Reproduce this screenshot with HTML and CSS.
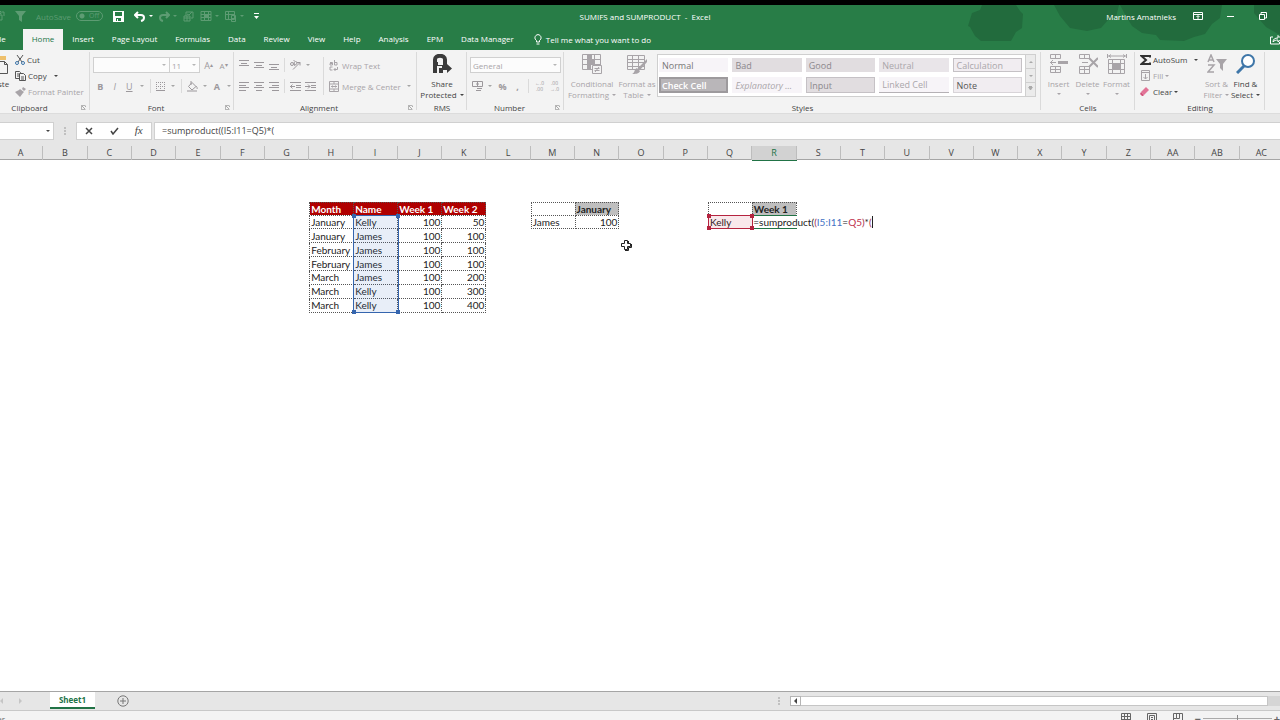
FILE: index.html
```
<!DOCTYPE html>
<html lang="en">
<head>
    <meta charset="UTF-8">
    <meta name="viewport" content="width=device-width, initial-scale=1.0">
    <title>SUMIFS and SUMPRODUCT - Excel</title>
    <link rel="stylesheet" href="styles.css">
</head>
<body>
    <header class="top">
        <svg class="blobs" width="320" height="45" viewBox="0 0 320 45" aria-hidden="true">
            <path d="M14 0h34l4 6 3 3-1 14-6 4-5 9H13L7 31 2 22l-2-1 4-13 8-3z"/>
            <path d="M86 0h65l-3 12-8 3-7 8-14 3-17-3-10-12z"/>
            <path d="M152 0h102l-2 13-8 6-7 10-11 3-10 4-24-1-4-5-14-2-10-7-6-10z"/>
            <path d="M286 0h34v30l-10-1-12-7-7-8-5-6z"/>
        </svg>
        <div class="titlebar">
            <div class="qat">
                <button class="dim" aria-label="Sort"><svg width="12" height="12" viewBox="0 0 12 12"><path d="M5 1.500h3v2H5M5 5h4v5H5zM2 1v9M0 8l2 2 2-2M9 2h2v4"/></svg></button>
                <button class="dim gapped" aria-label="Filter"><svg width="11" height="11" viewBox="0 0 11 11"><path class="fill" d="M0 0h11L7 5v6L4 9V5z"/></svg></button>
                <label class="autosave dim"><span>AutoSave</span><input type="checkbox" disabled><span class="toggle">Off</span></label>
                <button class="gapped" aria-label="Save"><svg width="11" height="11" viewBox="0 0 11 11"><path class="fill" fill-rule="evenodd" d="M0 0h11v11H0zM2 1v4h7V1zM3 7v3h1V8h1v2h3V7z"/></svg></button>
                <button class="gapped" aria-label="Undo"><svg width="12" height="11" viewBox="0 0 12 11"><path class="thick" d="M4 1L1 4l3 3M1 4h6c4 0 4 5 0 6"/></svg><i class="caret"></i></button>
                <button class="dim" aria-label="Redo"><svg width="11" height="11" viewBox="0 0 11 11"><path class="thick" d="M7 1l3 3-3 3M10 4H4c-4 0-4 5 0 6"/></svg><i class="caret"></i></button>
                <button class="dim" aria-label="Edit chart"><svg width="11" height="11" viewBox="0 0 11 11"><path d="M3 5V1h7v6H8M1 5h6v5H1zM1 7h6M4 5v5M4 3l2 1 3-3"/></svg></button>
                <button class="dim" aria-label="Pivot table"><svg width="12" height="11" viewBox="0 0 12 11"><path d="M1 .5h10v9H1zM1 3.500h10M1 6.500h10M4.500.500v9M8.500.500v9"/><path class="fill" d="M4 3h5v4H4z"/></svg><i class="caret"></i></button>
                <button class="dim" aria-label="Insert cells"><svg width="12" height="11" viewBox="0 0 12 11"><path d="M.5.500h9v8h-9zM.5 3.500h9M3.500.500v8M6.500 4.500h4v6h-4zM6 7.500h4"/></svg><i class="caret"></i></button>
                <button class="gapped" aria-label="Customize toolbar"><svg width="5" height="6" viewBox="0 0 5 6"><path class="fill" d="M0 0h5v1H0zM0 3h5L2.500 6z"/></svg></button>
            </div>
            <h1>SUMIFS and SUMPRODUCT&nbsp; -&nbsp; Excel</h1>
            <div class="window">
                <span class="user">Martins Amatnieks</span>
                <button aria-label="Ribbon display"><svg width="10" height="9" viewBox="0 0 10 9"><path d="M.5.500h9v7h-9zM.5 2.500h9M5 7V4M3.500 5L5 3.500 6.500 5"/></svg></button>
                <button aria-label="Minimize"><svg width="8" height="8" viewBox="0 0 8 8"><path d="M0 4.500h7"/></svg></button>
                <button aria-label="Restore"><svg width="8" height="8" viewBox="0 0 8 8"><path d="M.5 2.500h5v5h-5zM2 2V.5h5.500V6H6"/></svg></button>
            </div>
        </div>
        <nav class="tabs">
            <a href="#" class="file">File</a>
            <a href="#" class="active">Home</a>
            <a href="#">Insert</a>
            <a href="#">Page Layout</a>
            <a href="#">Formulas</a>
            <a href="#">Data</a>
            <a href="#">Review</a>
            <a href="#">View</a>
            <a href="#">Help</a>
            <a href="#">Analysis</a>
            <a href="#">EPM</a>
            <a href="#">Data Manager</a>
            <a href="#" class="tell"><svg width="8" height="11" viewBox="0 0 8 11"><path d="M2.500 8V6.500C0 5 .5 1 4 .6 7.500 1 8 5 5.500 6.500V8zM2.500 10h3"/></svg>Tell me what you want to do</a>
            <a href="#" class="share" aria-label="Share"><svg width="12" height="11" viewBox="0 0 12 11"><path d="M3 3H.5v7h9V8M3 8c0-3 2-4 5-4V1.500L11.500 5 8 8V6C6 6 4 6.500 3 8z"/></svg></a>
        </nav>
    </header>

    <main class="ribbon">
        <section class="group clipboard">
            <div class="tools">
                <button class="big paste"><svg width="18" height="20" viewBox="0 0 18 20"><path class="gold" d="M1 2h15v4H1z"/><path class="dark" d="M7.500 7.500h7l3 3v9h-10zM14.500 7.500v3h3"/></svg><span>Paste</span></button>
                <div class="stack">
                    <button><svg width="10" height="10" viewBox="0 0 10 10"><path class="dark" d="M2 0l5 7M8 0L3 7"/><circle class="blue" cx="2" cy="8" r="1.500"/><circle class="blue" cx="8" cy="8" r="1.500"/></svg>Cut</button>
                    <button><svg width="11" height="10" viewBox="0 0 11 10"><path class="dark" d="M4 7.500H.5v-7h4l1 1V3M4.500 2.500h4l2 2v5h-6zM6 6h3M6 8h3M2 3h2M2 5h2"/></svg>Copy<i class="caret push"></i></button>
                    <button disabled><svg width="11" height="10" viewBox="0 0 11 10"><path class="fill" d="M8 0l3 2-2 2-2-2zM5 2l4 3-1 1-4-3zM0 5l4-2 4 3-3 4z"/></svg>Format Painter</button>
                </div>
            </div>
            <h2>Clipboard</h2><i class="launch"></i>
        </section>

        <section class="group font">
            <div class="tools rows">
                <div class="row">
                    <span class="drop name"><select aria-label="Font name" disabled><option></option></select><i class="caret"></i></span><span class="drop size"><select aria-label="Font size" disabled><option>11</option></select><i class="caret"></i></span>
                    <button class="tool grow" disabled>A<sup>▴</sup></button>
                    <button class="tool shrink" disabled>A<sup>▾</sup></button>
                </div>
                <div class="row">
                    <button class="tool" disabled><b>B</b></button>
                    <button class="tool" disabled><em>I</em></button>
                    <button class="tool" disabled><u>U</u></button>
                    <i class="caret"></i><i class="sep"></i>
                    <button class="tool" disabled aria-label="Borders"><svg width="9" height="9" viewBox="0 0 9 9"><path stroke-dasharray="1 1" d="M0 .5h9M.5 0v9M8.500 0v9M4.500 0v9M0 4.500h9"/><path d="M0 8.500h9"/></svg></button>
                    <i class="caret"></i><i class="sep"></i>
                    <button class="tool" disabled aria-label="Fill color"><svg width="11" height="11" viewBox="0 0 11 11"><path d="M5 1.500l4 4-4 3.500-3.500-3.500zM4 0v4M9 5c1 1 1.500 2 1 3"/><path class="fill" d="M0 9h10v2H0z" opacity=".5"/></svg></button>
                    <i class="caret"></i>
                    <button class="tool" disabled><b>A</b></button>
                    <i class="caret"></i>
                </div>
            </div>
            <h2>Font</h2><i class="launch"></i>
        </section>

        <section class="group alignment">
            <div class="tools">
                <div class="rows part">
                    <div class="row">
                        <button class="tool" disabled aria-label="Top align"><svg width="10" height="10" viewBox="0 0 10 10"><path d="M0 .5h10M2 3.500h6M0 5.500h10"/></svg></button>
                        <button class="tool" disabled aria-label="Middle align"><svg width="10" height="10" viewBox="0 0 10 10"><path d="M0 2.500h10M2 5.500h6M0 7.500h10"/></svg></button>
                        <button class="tool" disabled aria-label="Bottom align"><svg width="10" height="10" viewBox="0 0 10 10"><path d="M0 4.500h10M2 7.500h6M0 9.500h10"/></svg></button>
                        <i class="sep"></i>
                        <button class="tool" disabled aria-label="Orientation"><svg width="11" height="10" viewBox="0 0 11 10"><path d="M3 9.500l7-7M10 5.500v-3H7"/><circle cx="2" cy="4" r="1.500"/><circle cx="5.500" cy="3" r="1.500"/><path d="M4 4l1 2M4 1V0"/></svg></button>
                        <i class="caret"></i>
                    </div>
                    <div class="row">
                        <button class="tool" disabled aria-label="Align left"><svg width="10" height="9" viewBox="0 0 10 9"><path d="M0 .5h10M0 3.500h7M0 5.500h10M0 8.500h7"/></svg></button>
                        <button class="tool" disabled aria-label="Center"><svg width="10" height="9" viewBox="0 0 10 9"><path d="M0 .5h10M2 3.500h6M0 5.500h10M2 8.500h6"/></svg></button>
                        <button class="tool" disabled aria-label="Align right"><svg width="10" height="9" viewBox="0 0 10 9"><path d="M0 .5h10M3 3.500h7M0 5.500h10M3 8.500h7"/></svg></button>
                        <i class="sep"></i>
                        <button class="tool" disabled aria-label="Decrease indent"><svg width="11" height="9" viewBox="0 0 11 9"><path d="M0 .5h11M6 3.500h5M6 5.500h5M0 8.500h11M0 4.500h5M2.500 2.500l-2 2 2 2"/></svg></button>
                        <button class="tool" disabled aria-label="Increase indent"><svg width="11" height="9" viewBox="0 0 11 9"><path d="M0 .5h11M6 3.500h5M6 5.500h5M0 8.500h11M0 4.500h5M3 2.500l2 2-2 2"/></svg></button>
                    </div>
                </div>
                <i class="sep tall"></i>
                <div class="rows">
                    <button class="text" disabled><svg width="10" height="11" viewBox="0 0 10 11"><path d="M1 2.500h2.500V5H1V3.500h2M5.500 0v5M5.500 2.500H8V5H5.500M3.500 7H1v3h2.500M5 9.500h3.500V7M6.500 8L5 9.500 6.500 11"/></svg>Wrap Text</button>
                    <button class="text" disabled><svg width="10" height="11" viewBox="0 0 10 11"><path d="M.5.500h9v10h-9zM.5 3h9M.5 8h9M5 .5V3M5 8v2.500M2 5.500h6M3.500 4.500l-1 1 1 1M6.500 4.500l1 1-1 1"/></svg>Merge &amp; Center<i class="caret"></i></button>
                </div>
            </div>
            <h2>Alignment</h2><i class="launch"></i>
        </section>

        <section class="group rms">
            <div class="tools">
                <button class="big"><svg width="20" height="20" viewBox="0 0 20 20"><path class="lock" d="M3 9V5.500c0-5 10-5 10 0V9"/><path class="solid" d="M1 8h5v3h5V8h4v2l5 4.500-5 4.500v-3h-4v3H7v-5h3v-2H5v7H1z"/></svg><span>Share<br>Protected<i class="caret"></i></span></button>
            </div>
            <h2>RMS</h2>
        </section>

        <section class="group number">
            <div class="tools rows">
                <div class="row">
                    <span class="drop format"><select aria-label="Number format" disabled><option>General</option></select><i class="caret"></i></span>
                </div>
                <div class="row">
                    <button class="tool" disabled aria-label="Accounting format"><svg width="11" height="10" viewBox="0 0 11 10"><path d="M.5.500h10v5H.5zM4 3h3M5.500 1v4M5 7.500h5M4 9.500h5"/></svg></button>
                    <i class="caret"></i>
                    <button class="tool" disabled><b>%</b></button>
                    <button class="tool" disabled><b>,</b></button>
                    <i class="sep"></i>
                    <button class="tool tiny" disabled><span>←.0</span><span>.00</span></button>
                    <button class="tool tiny" disabled><span>.00</span><span>→.0</span></button>
                </div>
            </div>
            <h2>Number</h2><i class="launch"></i>
        </section>

        <section class="group styles">
            <div class="tools">
                <button class="big cond" disabled><svg width="20" height="20" viewBox="0 0 20 20"><path d="M.5.500h18v15H.5zM.5 5.500h18M.5 10.500h18M5.500.500v15M12.500.500v15"/><path class="fill" d="M6 1h4v4H6zM6 6h6v4H6zM6 11h3v4H6z"/><path class="paper" d="M10.500 11.500h9v8h-9z"/><path d="M12.500 14.500h5M12.500 16.500h5M17 13l-4 5"/></svg><span>Conditional<br>Formatting<i class="caret"></i></span></button>
                <button class="big" disabled><svg width="20" height="20" viewBox="0 0 20 20"><path d="M.5 1.500h17v14H.5zM.5 5.500h17M.5 8.500h17M.5 12.500h17M5.500 1.500v14M11.500 1.500v14"/><path class="fill" d="M20 5v3l-7 8-2-2zM10 14l3 3c-1 3-5 3-8 3 3-1 2-5 5-6z"/></svg><span>Format as<br>Table<i class="caret"></i></span></button>
                <div class="gallery">
                    <div class="swatches">
                        <button class="normal">Normal</button>
                        <button class="bad">Bad</button>
                        <button class="good">Good</button>
                        <button class="neutral">Neutral</button>
                        <button class="calc">Calculation</button>
                        <button class="check">Check Cell</button>
                        <button class="expl">Explanatory ...</button>
                        <button class="input">Input</button>
                        <button class="linked">Linked Cell</button>
                        <button class="note">Note</button>
                    </div>
                    <div class="scroll">
                        <button aria-label="Up"><i class="caret up"></i></button>
                        <button aria-label="Down"><i class="caret"></i></button>
                        <button aria-label="More"><i class="caret more"></i></button>
                    </div>
                </div>
            </div>
            <h2>Styles</h2>
        </section>

        <section class="group cells">
            <div class="tools">
                <button class="big" disabled><svg width="20" height="20" viewBox="0 0 20 20"><path d="M1.500.500h10v4h-10zM6.500.500v4M1.500 12.500h10v6h-10zM6.500 12.500v6M1.500 15.500h10M1 8.500h6M4 6L1.500 8.500 4 11"/><path class="fill" d="M9 7h10v3H9z"/></svg><span>Insert</span><i class="caret"></i></button>
                <button class="big" disabled><svg width="20" height="20" viewBox="0 0 20 20"><path d="M1.500.500h10v4h-10zM6.500.500v4M1.500 12.500h10v7h-10zM6.500 12.500v7M1.500 15.500h10M4 8.500h6"/><path class="thick" d="M11 4l9 9M20 4l-9 9"/></svg><span>Delete</span><i class="caret"></i></button>
                <button class="big" disabled><svg width="20" height="20" viewBox="0 0 20 20"><path d="M.5 0v4M19.500 0v4M1 2h18M4 .5L2 2l2 1.500M16 .5L18 2l-2 1.500M1.500 5.500h16v14h-16zM1.500 9.500h16M1.500 15.500h16M5.500 5.500v14M13.500 5.500v14"/><path class="fill" d="M6 10h7v5H6z"/></svg><span>Format</span><i class="caret"></i></button>
            </div>
            <h2>Cells</h2>
        </section>

        <section class="group editing">
            <div class="tools">
                <div class="stack">
                    <button><svg width="11" height="10" viewBox="0 0 11 10"><path class="sigma" d="M10 2.500V1H1.500L6 5 1.500 9H10V7.500"/></svg>AutoSum<i class="caret push"></i></button>
                    <button disabled><svg width="11" height="11" viewBox="0 0 11 11"><path d="M1.500.500h8v10h-8zM1.500 2.500h8M5.500 4v5M3.500 7l2 2 2-2"/></svg>Fill<i class="caret"></i></button>
                    <button><svg width="11" height="10" viewBox="0 0 11 10"><path class="pink" d="M6 0l3 3-5 5-3-3z"/><path class="rose" d="M1 5l3 3-1 1H2L0 7z"/></svg>Clear<i class="caret"></i></button>
                </div>
                <button class="big sort" disabled><svg width="20" height="20" viewBox="0 0 20 20"><path class="bold" d="M1 8l3-7 3 7M2 6h4M1 11h6l-6 7h6"/><path class="fill" d="M9 5h11l-4 5v7l-3-3v-4z"/></svg><span>Sort &amp;<br>Filter<i class="caret"></i></span></button>
                <button class="big"><svg width="20" height="20" viewBox="0 0 20 20"><circle class="lens" cx="12" cy="7" r="6"/><path class="handle" d="M8 12l-7 7"/></svg><span>Find &amp;<br>Select<i class="caret"></i></span></button>
            </div>
            <h2>Editing</h2>
        </section>
    </main>

    <div class="formulabar">
        <span class="namebox"><input type="text" aria-label="Name box"><i class="caret"></i></span>
        <span class="dots"></span>
        <div class="actions">
            <button aria-label="Cancel"><svg width="8" height="8" viewBox="0 0 8 8"><path class="bold" d="M1 1l6 6M7 1L1 7"/></svg></button>
            <button aria-label="Enter"><svg width="9" height="8" viewBox="0 0 9 8"><path class="bold" d="M1 4l2 3 5-6"/></svg></button>
            <button class="fx"><em>fx</em></button>
        </div>
        <input class="formula" type="text" aria-label="Formula" value="=sumproduct((I5:I11=Q5)*(">
    </div>

    <div class="columns" id="columns"></div>

    <div class="sheet">
        <table class="data">
            <thead>
                <tr><th>Month</th><th>Name</th><th>Week 1</th><th>Week 2</th></tr>
            </thead>
            <tbody>
                <tr><td>January</td><td>Kelly</td><td class="num">100</td><td class="num">50</td></tr>
                <tr><td>January</td><td>James</td><td class="num">100</td><td class="num">100</td></tr>
                <tr><td>February</td><td>James</td><td class="num">100</td><td class="num">100</td></tr>
                <tr><td>February</td><td>James</td><td class="num">100</td><td class="num">100</td></tr>
                <tr><td>March</td><td>James</td><td class="num">100</td><td class="num">200</td></tr>
                <tr><td>March</td><td>Kelly</td><td class="num">100</td><td class="num">300</td></tr>
                <tr><td>March</td><td>Kelly</td><td class="num">100</td><td class="num">400</td></tr>
            </tbody>
        </table>
        <table class="sumifs">
            <tr><td></td><th>January</th></tr>
            <tr><td>James</td><td class="num">100</td></tr>
        </table>
        <table class="product">
            <tr><td></td><th>Week 1</th></tr>
            <tr><td>Kelly</td><td></td></tr>
        </table>
        <div class="range names"><i></i><i></i><i></i><i></i></div>
        <div class="range criteria"><i></i><i></i><i></i><i></i></div>
        <div class="edit"><span>=sumproduct(<span class="p1">(</span><span class="r1">I5:I11</span>=<span class="r2">Q5</span><span class="p1">)</span>*<span class="p1">(</span></span></div>
        <svg class="cursor" width="11" height="11" viewBox="0 0 11 11"><path d="M3.500.500h3v3h3v3h-3v3h-3v-3h-3v-3h3z"/><path class="shadow" d="M7.500 1v2M10.500 4v3.500H7.500v3H4"/></svg>
    </div>

    <footer>
        <div class="sheetbar">
            <button class="arrow" aria-label="Previous sheet"><i class="tri left"></i></button>
            <button class="arrow" aria-label="Next sheet"><i class="tri"></i></button>
            <button class="sheettab">Sheet1</button>
            <button class="add" aria-label="New sheet"><svg width="12" height="12" viewBox="0 0 12 12"><circle cx="6" cy="6" r="5.200"/><path d="M6 3v6M3 6h6"/></svg></button>
            <div class="hscroll">
                <span class="dots"></span>
                <button aria-label="Scroll left"><i class="tri left"></i></button>
                <div class="thumb"></div>
                <div class="rest"></div>
            </div>
        </div>
        <div class="status">
            <span class="mode">Enter</span>
            <div class="views">
                <button aria-label="Normal view"><svg width="10" height="10" viewBox="0 0 10 10"><path d="M.5.500h9v9h-9zM.5 3.500h9M.5 6.500h9M3.500.500v9M6.500.500v9"/></svg></button>
                <button aria-label="Page layout view"><svg width="10" height="10" viewBox="0 0 10 10"><path d="M.5.500h9v9h-9zM2.500 2.500h5v7h-5zM4 4.500h2M4 6.500h2"/></svg></button>
                <button aria-label="Page break view"><svg width="10" height="10" viewBox="0 0 10 10"><path d="M.5 10V.5h9V10M3.500.500v5h3v-5M.5 5.500h3"/></svg></button>
            </div>
            <button class="zoom" aria-label="Zoom out">−</button>
            <input type="range" aria-label="Zoom" min="10" max="400" value="205">
            <button class="zoom" aria-label="Zoom in">+</button>
        </div>
    </footer>

    <script>
        const columns = document.getElementById('columns');

        function columnName(n){
            return n < 26 ? String.fromCharCode(65 + n) : 'A' + String.fromCharCode(65 + n - 26);
        }

        for (let i = 0; i < 29; i++) {
            const cell = document.createElement('span');
            cell.textContent = columnName(i);
            if (cell.textContent === 'R') {
                cell.classList.add('current');
            }
            columns.appendChild(cell);
        }
    </script>
</body>
</html>
```
FILE: styles.css
```
* {
    margin: 0;
    padding: 0;
    box-sizing: border-box;
}

body {
    display: flex;
    flex-direction: column;
    height: 100vh;
    overflow: hidden;
    background-color: white;
    color: #444;
    font-family: 'Open Sans', 'Noto Sans', sans-serif;
    font-size: 8px;
    line-height: 11px;
}

button,
input,
select {
    font: inherit;
    color: inherit;
    background: none;
    border: none;
    outline: none;
}

button {
    display: flex;
    align-items: center;
    white-space: nowrap;
}

a {
    color: inherit;
    text-decoration: none;
}

svg {
    flex: none;
    fill: none;
    stroke: currentColor;
}

.fill {
    fill: currentColor;
    stroke: none;
}

.thick {
    stroke-width: 2;
}

.bold {
    stroke-width: 1.500;
}

button:disabled,
select:disabled {
    color: #a8a4a8;
    opacity: 1;
}

.caret {
    flex: none;
    width: 0;
    height: 0;
    border: 2px solid transparent;
    border-top-color: currentColor;
    border-bottom-width: 0;
    margin: 0 3px;
}

/* title bar and tabs */
.top {
    position: relative;
    flex: none;
    border-top: 5px solid black;
    background-color: #287d47;
    color: white;
}

.blobs {
    position: absolute;
    top: 0;
    right: -8px;
    fill: #226b3d;
    stroke: none;
}

.titlebar {
    position: relative;
    display: grid;
    grid-template-columns: 1fr auto 1fr;
    align-items: center;
    height: 24px;
    padding: 0 0 2px 10px;
}

.qat {
    display: flex;
    align-items: center;
    gap: 6px;
    margin-left: -17px;
}

.qat .caret {
    margin-right: 0;
}

.dim {
    color: #5d9c73;
}

.gapped {
    margin-left: 4px;
}

.autosave {
    display: flex;
    align-items: center;
    gap: 5px;
    margin-left: 4px;
}

.autosave input {
    display: none;
}

.toggle {
    border: 1px solid;
    border-radius: 5px;
    width: 27px;
    height: 10px;
    padding-left: 12px;
    font-size: 7px;
    line-height: 8px;
    background: radial-gradient(circle at 5px 4px, #5d9c73 2px, transparent 3px);
}

h1 {
    font-size: 8px;
    font-weight: 400;
}

.window {
    display: flex;
    align-items: center;
    justify-content: flex-end;
    gap: 24px;
    padding-right: 13px;
}

.user {
    margin-right: -7px;
}

.tabs {
    position: relative;
    display: flex;
    height: 21px;
    margin-left: -16px;
    line-height: 20px;
}

.tabs a {
    padding: 0 9px;
    white-space: nowrap;
}

.tabs .file {
    margin-right: 8px;
}

.tabs .active {
    background-color: #f3f3f3;
    color: #217346;
}

.tabs .tell {
    display: flex;
    align-items: center;
    gap: 4px;
    margin-left: 2px;
}

.tabs .share {
    display: flex;
    align-items: center;
    margin-left: auto;
    margin-right: -2px;
    padding: 0;
}

/* ribbon */
.ribbon {
    display: flex;
    flex: none;
    height: 63px;
    background-color: #f3f3f3;
}

.group {
    position: relative;
    display: flex;
    flex-direction: column;
    flex: none;
}

.group::after {
    content: '';
    position: absolute;
    right: 0;
    top: 2px;
    bottom: 3px;
    border-right: 1px solid #dadada;
}

.tools {
    display: flex;
    height: 52px;
}

.rows {
    display: flex;
    flex-direction: column;
    gap: 5px;
    padding-top: 7px;
}

.row {
    display: flex;
    align-items: center;
    height: 16px;
}

.stack {
    display: flex;
    flex-direction: column;
    gap: 5px;
    padding-top: 4px;
}

.stack button {
    gap: 2px;
    height: 11px;
}

.stack .caret {
    margin: 0;
}

.stack .push {
    margin-left: 5px;
}

.group h2 {
    font-size: 8px;
    font-weight: 400;
    line-height: 11px;
    text-align: center;
}

.launch {
    position: absolute;
    right: 4px;
    bottom: 3px;
    width: 5px;
    height: 5px;
    border: 1px solid #b5b5b5;
    border-right-color: transparent;
    background: linear-gradient(45deg, transparent 45%, #aaa 45%, #aaa 65%, transparent 65%);
}

.big {
    flex-direction: column;
    padding-top: 4px;
    line-height: 11px;
}

.big svg {
    margin-bottom: 4px;
}

.big span .caret {
    display: inline-block;
    margin: 0 0 2px 3px;
}

.big > .caret {
    margin-top: 4px;
}

.tool {
    justify-content: center;
    width: 15px;
    height: 15px;
    font-size: 9px;
}

.tool:disabled {
    color: #9c989c;
}

.tool sup {
    font-size: 6px;
}

.tiny {
    flex-direction: column;
    font-size: 5px;
    line-height: 6px;
}

.sep {
    height: 14px;
    margin: 0 3px;
    border-left: 1px solid #dadada;
}

.tall {
    height: 38px;
    margin-top: 7px;
}

.drop {
    position: relative;
    display: flex;
    align-items: center;
    height: 16px;
    border: 1px solid #d0d0d0;
    background-color: #fcfcfc;
}

.drop select {
    appearance: none;
    width: 100%;
    padding-left: 2px;
}

.drop .caret {
    position: absolute;
    right: 0;
    color: #b5b5b5;
}

.row > .caret,
.text .caret {
    color: #a5a5a5;
}

.text {
    gap: 3px;
    height: 16px;
}

.dark {
    stroke: #555;
}

.gold {
    fill: #eec06c;
    stroke: none;
}

.blue {
    stroke: #3e76a8;
}

.solid {
    fill: #3b3b3b;
    stroke: none;
}

.lock {
    stroke: #3b3b3b;
    stroke-width: 4;
}

.sigma {
    stroke: #333;
    stroke-width: 2;
}

.pink {
    fill: #e27396;
    stroke: none;
}

.rose {
    fill: #d2527b;
    stroke: none;
}

.lens {
    fill: white;
    stroke: #3e76a8;
    stroke-width: 2;
}

.handle {
    stroke: #3e76a8;
    stroke-width: 3;
}

.paper {
    fill: #f3f3f3;
}

.clipboard {
    width: 90px;
}

.clipboard .stack {
    margin-left: 7px;
}

.clipboard h2 {
    padding-right: 31px;
}

.paste {
    width: 18px;
    margin-left: -10px;
}

.font {
    width: 144px;
}

.font .tools,
.alignment .tools,
.number .tools {
    padding-left: 3px;
}

.alignment .tools {
    padding-left: 2px;
}

.font h2 {
    padding-right: 12px;
}

.name {
    width: 77px;
}

.size {
    width: 30px;
    border-left: none;
}

.grow {
    margin-left: 1px;
}

.shrink {
    font-size: 8px;
}

.alignment {
    width: 183px;
}

.alignment h2 {
    padding-right: 13px;
}

.alignment .part {
    width: 84px;
}

.alignment .tall {
    margin-right: 5px;
}

.rms {
    width: 50px;
}

.rms .big {
    width: 100%;
}

.number {
    width: 97px;
}

.number h2 {
    padding-right: 12px;
}

.format {
    width: 91px;
}

.styles {
    flex: 1;
}

.cond {
    width: 56px;
}

.styles .big + .big {
    width: 34px;
}

.gallery {
    display: flex;
    flex: 1;
    height: 43px;
    margin: 4px 5px 0 3px;
    border: 1px solid #cfcfcf;
    background-color: white;
}

.swatches {
    display: grid;
    grid-template-columns: repeat(5, 1fr);
    gap: 5px 4px;
    flex: 1;
    padding: 3px 3px 3px 1px;
}

.swatches button {
    padding-left: 3px;
    font-size: 9px;
    background-color: #f7f4f8;
    color: #aaa6aa;
}

.swatches .normal {
    color: #777;
}

.swatches .bad,
.swatches .good,
.swatches .input {
    background-color: #e1dde0;
    color: #8b878b;
}

.swatches .neutral {
    background-color: #e9e5e9;
}

.swatches .calc {
    background-color: #f1edf1;
    border: 1px solid #c5c1c5;
}

.swatches .check {
    background-color: #b9b6b9;
    border: 2px solid #9d9a9d;
    padding-left: 1px;
    color: white;
    font-weight: 600;
}

.swatches .expl {
    font-style: italic;
}

.swatches .input {
    border: 1px solid #c5c1c5;
}

.swatches .linked {
    border-bottom: 1px solid #b5b1b5;
}

.swatches .note {
    background-color: #f1edf1;
    border: 1px solid #d8d4d8;
    color: #555;
}

.scroll {
    display: flex;
    flex-direction: column;
    width: 10px;
    border-left: 1px solid #cfcfcf;
    color: #aaa;
    background-color: #ebebeb;
}

.scroll button {
    flex: 1;
    justify-content: center;
}

.scroll button + button {
    border-top: 1px solid #cfcfcf;
}

.scroll .up {
    transform: rotate(180deg);
}

.scroll .more {
    width: 5px;
    height: 5px;
    border-width: 3px 2px 0;
    box-shadow: 0 -2px 0 -1px #aaa;
}

.cells {
    width: 94px;
}

.cells .tools {
    padding: 0 3px;
}

.cells .big {
    width: 29px;
}

.editing {
    width: 130px;
    margin-right: 15px;
}

.editing .tools {
    padding-left: 5px;
}

.editing .stack {
    width: 62px;
}

.editing .big {
    width: 29px;
}

/* formula bar */
.formulabar {
    display: flex;
    align-items: center;
    flex: none;
    height: 33px;
    padding-top: 1px;
    background-color: #e6e6e6;
    border-top: 1px solid #dcdcdc;
}

.namebox {
    display: flex;
    align-items: center;
    width: 54px;
    height: 18px;
    background-color: white;
    border: 1px solid #d0d0d0;
    border-left: none;
}

.namebox input {
    min-width: 0;
    flex: 1;
}

.dots {
    width: 22px;
    height: 8px;
    background: radial-gradient(circle, #999 1px, transparent 1px) center / 22px 3px repeat-y;
}

.actions {
    display: flex;
    width: 76px;
    height: 18px;
    background-color: white;
    border: 1px solid #d0d0d0;
}

.actions button {
    flex: 1;
    justify-content: center;
}

.actions .fx {
    font-family: 'Liberation Serif', serif;
    font-size: 11px;
}

.formula {
    flex: 1;
    height: 18px;
    margin-left: 2px;
    padding-left: 7px;
    font-size: 9px;
    background-color: white;
    border: 1px solid #d0d0d0;
    border-right: none;
}

/* sheet */
.columns {
    display: grid;
    grid-template-columns: repeat(29, 1fr);
    flex: none;
    width: calc(100% + 5px);
    height: 14px;
    margin-left: -1px;
    background-color: #e6e6e6;
    border-bottom: 1px solid #a5a5a5;
    font-size: 9px;
    line-height: 14px;
    text-align: center;
}

.columns span {
    border-right: 1px solid #bdbdbd;
}

.columns .current {
    background-color: #d2d2d2;
    color: #217346;
    box-shadow: 0 1px #217346;
}

.sheet {
    display: grid;
    grid-template-columns: repeat(29, minmax(0, 1fr));
    grid-template-rows: repeat(38, minmax(0, 1fr));
    flex: 1;
    min-height: 0;
    width: calc(100% + 5px);
    margin-left: -1px;
    padding-bottom: 4px;
    font-family: Lato, 'Open Sans', sans-serif;
    font-size: 10px;
    line-height: 12px;
    color: #222;
}

table {
    width: 100%;
    height: 100%;
    table-layout: fixed;
    border-collapse: collapse;
}

th,
td {
    padding: 1px 1px 0;
    border: 1px dotted #555;
    line-height: 11px;
    text-align: left;
    white-space: nowrap;
}

th {
    font-weight: 700;
    background-color: #bfbfbf;
}

.num {
    text-align: right;
}

.data {
    grid-area: 4 / 8 / span 8 / span 4;
}

.data th {
    background-color: #b00000;
    color: white;
}

.sumifs {
    grid-area: 4 / 13 / span 2 / span 2;
}

.product {
    grid-area: 4 / 17 / span 2 / span 2;
}

.range {
    position: relative;
    margin-right: -1px;
    border: 1px solid;
}

.range i {
    position: absolute;
    width: 4px;
    height: 4px;
    background-color: currentColor;
}

.range i:nth-child(odd) {
    left: -2px;
}

.range i:nth-child(even) {
    right: -2px;
}

.range i:nth-child(-n+2) {
    top: -2px;
}

.range i:nth-child(n+3) {
    bottom: -2px;
}

.names {
    grid-area: 5 / 9 / span 7 / span 1;
    color: #3565ae;
    background-color: rgba(68, 114, 196, 0.12);
}

.criteria {
    grid-area: 5 / 17 / span 1 / span 1;
    color: #b5233f;
    background-color: rgba(200, 30, 60, 0.1);
}

.edit {
    grid-area: 5 / 18 / span 1 / span 1;
    border-top: 1px solid #217346;
    border-bottom: 1px solid #217346;
    margin-left: 1px;
    white-space: nowrap;
}

.edit > span {
    display: inline-block;
    border-right: 1px solid #222;
    background-color: white;
}

.p1 {
    color: #a02c4a;
}

.r1 {
    color: #4472c4;
}

.r2 {
    color: #c0314d;
}

.cursor {
    grid-area: 6 / 15 / span 2 / span 1;
    margin: 11px 0 0 2px;
    fill: white;
    stroke: #222;
}

.cursor .shadow {
    fill: none;
}

/* bottom bars */
footer {
    flex: none;
    background-color: #e6e6e6;
}

.sheetbar {
    display: flex;
    align-items: center;
    height: 19px;
    border-top: 1px solid #a5a5a5;
}

.tri {
    border: 3px solid transparent;
    border-left-color: currentColor;
    border-right-width: 0;
}

.left {
    transform: rotate(180deg);
}

.arrow {
    width: 19px;
    color: #c5c5c5;
}

.arrow + .arrow {
    width: 31px;
}

.sheettab {
    align-self: flex-start;
    justify-content: center;
    width: 45px;
    height: 17px;
    background-color: white;
    border-bottom: 2px solid #217346;
    color: #217346;
    font-size: 8px;
    font-weight: 700;
}

.add {
    margin-left: 22px;
    color: #777;
}

.hscroll {
    display: flex;
    align-items: center;
    width: 40%;
    height: 10px;
    margin-left: auto;
}

.hscroll button {
    justify-content: center;
    width: 11px;
    height: 10px;
    background-color: white;
    border: 1px solid #b5b5b5;
}

.thumb {
    flex: 1;
    height: 10px;
    background-color: white;
    border: 1px solid #c5c5c5;
    border-left: none;
}

.rest {
    width: 12px;
    height: 10px;
    background-color: #d5d5d5;
}

.status {
    display: flex;
    align-items: center;
    height: 15px;
    margin-bottom: -5px;
    background-color: #f3f3f3;
    border-top: 1px solid #c8c8c8;
    color: #666;
}

.mode {
    flex: 1;
    margin-left: -15px;
}

.views {
    display: flex;
    gap: 16px;
    margin-right: 11px;
}

.zoom {
    font-size: 11px;
    font-weight: 700;
}

.status input {
    appearance: none;
    width: 69px;
    height: 8px;
    margin: 0 2px;
    background: linear-gradient(#aaa, #aaa) center / 100% 1px no-repeat;
}

.status input::-webkit-slider-thumb {
    appearance: none;
    width: 1px;
    height: 6px;
    background-color: #888;
}
```
